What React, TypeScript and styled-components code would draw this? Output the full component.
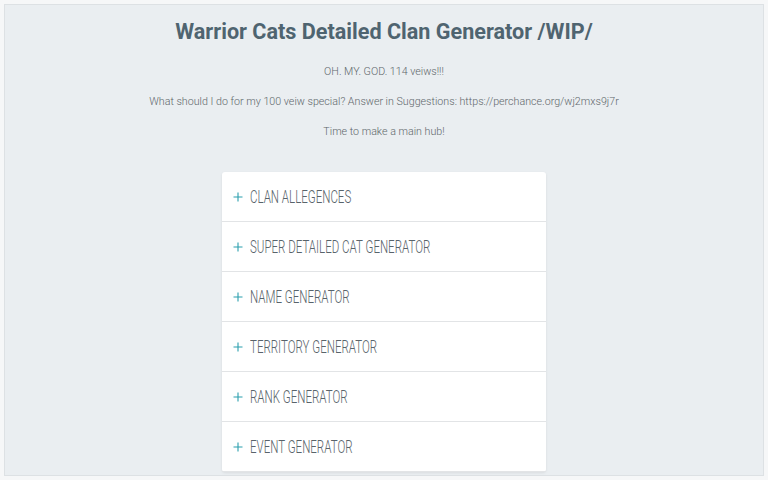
import styled, { createGlobalStyle } from "styled-components";

const GlobalStyle = createGlobalStyle`
  html, body {
    margin: 0;
    padding: 0;
    background: #f6f7f8;
  }
  body {
    font-family: Roboto, "Liberation Sans", sans-serif;
  }
`;

const Page = styled.div`
  padding: 4px;
  height: 480px;
  box-sizing: border-box;
`;

const Container = styled.div`
  height: 472px;
  box-sizing: border-box;
  border: 1px solid #dde1e4;
  background: #eaeef1;
  padding-top: 11px;
  overflow: hidden;
  display: flex;
  flex-direction: column;
  align-items: center;
`;

const Title = styled.h1`
  margin: 0 0 16px;
  font-size: 21.6px;
  line-height: 32px;
  font-weight: 700;
  color: #4f6470;
`;

const Note = styled.p`
  margin: 0 0 14px;
  font-size: 10.7px;
  line-height: 16px;
  font-weight: 300;
  color: #60676b;
  text-align: center;
`;

const Card = styled.div`
  margin-top: 18px;
  width: 324px;
  background: #fff;
  border-radius: 3px;
  box-shadow: 0 1px 3px rgba(0, 0, 0, 0.08);
`;

const Row = styled.div`
  height: 49px;
  display: flex;
  align-items: center;
  padding-left: 11px;
  border-bottom: 1px solid #e2e4e6;
`;

const Plus = styled.svg`
  width: 10px;
  height: 10px;
  margin-right: 7px;
  flex-shrink: 0;
`;

const Label = styled.span`
  display: inline-block;
  font-family: Roboto, sans-serif;
  font-weight: 300;
  font-size: 18px;
  color: #58636a;
  white-space: nowrap;
  transform: scaleX(0.64);
  transform-origin: left center;
`;

const items = [
  "CLAN ALLEGENCES",
  "SUPER DETAILED CAT GENERATOR",
  "NAME GENERATOR",
  "TERRITORY GENERATOR",
  "RANK GENERATOR",
  "EVENT GENERATOR",
];

export default function App() {
  return (
    <Page>
      <GlobalStyle />
      <Container>
        <Title>Warrior Cats Detailed Clan Generator /WIP/</Title>
        <Note>OH. MY. GOD. 114 veiws!!!</Note>
        <Note>
          What should I do for my 100 veiw special? Answer in Suggestions:
          https://perchance.org/wj2mxs9j7r
        </Note>
        <Note>Time to make a main hub!</Note>
        <Card>
          {items.map((name) => (
            <Row key={name}>
              <Plus viewBox="0 0 10 10">
                <path d="M5 0.5V9.5M0.5 5H9.5" stroke="#2a9fae" strokeWidth="1.1" />
              </Plus>
              <Label>{name}</Label>
            </Row>
          ))}
        </Card>
      </Container>
    </Page>
  );
}
